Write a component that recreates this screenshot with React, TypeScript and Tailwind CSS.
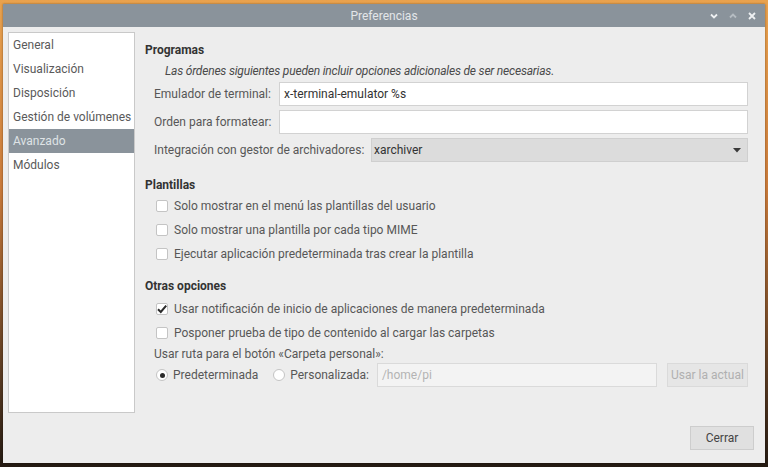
import { useState } from "react";

const sections = [
  "General",
  "Visualización",
  "Disposición",
  "Gestión de volúmenes",
  "Avanzado",
  "Módulos",
];

function CheckBox({ checked, label }: { checked?: boolean; label: string }) {
  return (
    <div className="flex h-[24px] items-center pl-[11px]">
      <div className="relative h-[12px] w-[12px] shrink-0 rounded-[2px] border border-[#c4c4c4] bg-white">
        {checked && (
          <svg viewBox="0 0 12 12" className="absolute left-[-1px] top-[-1px] h-[12px] w-[12px]">
            <path d="M2 6.2 L4.8 9 L10.2 2.6" fill="none" stroke="#2b2b2b" strokeWidth="2" />
          </svg>
        )}
      </div>
      <span className="ml-[6px] whitespace-nowrap">{label}</span>
    </div>
  );
}

function Radio({ checked }: { checked?: boolean }) {
  return (
    <div className="flex h-[12px] w-[12px] shrink-0 items-center justify-center rounded-full border border-[#c4c4c4] bg-white">
      {checked && <div className="h-[5px] w-[5px] rounded-full bg-[#2b2b2b]" />}
    </div>
  );
}

export default function App() {
  const [active, setActive] = useState("Avanzado");

  return (
    <div
      className="h-[467px] w-[768px] overflow-hidden bg-[linear-gradient(180deg,#e9a24e_0%,#c97a3a_40%,#5a3b22_80%,#241a12_100%)] pl-[3px] pt-[4px]"
      style={{ fontFamily: "Roboto, 'Liberation Sans', sans-serif" }}
    >
      <div className="flex h-[459px] w-[762px] flex-col bg-[#ededed] text-[12px] text-[#575757] shadow-[0_0_2px_rgba(0,0,0,0.4)]">
        {/* title bar */}
        <div className="relative flex h-[23px] shrink-0 items-center justify-center bg-[#8a939b]">
          <span className="text-[12px] text-[#e3e6e9]">Preferencias</span>
          <div className="absolute right-[8px] top-0 flex h-[23px] items-center gap-[9px]">
            <svg viewBox="0 0 10 10" className="h-[10px] w-[10px]">
              <path d="M2 3.5 L5 6.5 L8 3.5" fill="none" stroke="#eef0f2" strokeWidth="1.8" />
            </svg>
            <svg viewBox="0 0 10 10" className="h-[10px] w-[10px]">
              <path d="M2 6.5 L5 3.5 L8 6.5" fill="none" stroke="#b5bcc2" strokeWidth="1.8" />
            </svg>
            <svg viewBox="0 0 10 10" className="h-[10px] w-[10px]">
              <path d="M2 2 L8 8 M8 2 L2 8" fill="none" stroke="#eef0f2" strokeWidth="1.8" />
            </svg>
          </div>
        </div>

        {/* body */}
        <div className="flex flex-1 flex-col px-[5px] pt-[5px]">
          <div className="flex">
            <div className="h-[381px] w-[127px] shrink-0 border border-[#c9c9c9] bg-white">
              {sections.map((s) => (
                <div
                  key={s}
                  onClick={() => setActive(s)}
                  className={`flex h-[24px] items-center whitespace-nowrap pl-[4px] ${
                    active === s ? "bg-[#8a939b] text-[#dfe3e6]" : "text-[#5a5a5a]"
                  }`}
                >
                  {s}
                </div>
              ))}
            </div>

            <div className="ml-[10px] mr-[12px] flex min-w-0 flex-1 flex-col">
              <div className="mt-[9px] h-[18px] font-bold leading-[18px] text-[#333333]">Programas</div>
              <div className="mt-[2px] h-[21px] whitespace-nowrap pl-[20px] italic leading-[21px] tracking-[-0.2px] text-[#4a4a4a]">
                Las órdenes siguientes pueden incluir opciones adicionales de ser necesarias.
              </div>
              <div className="flex flex-col gap-[4px] pl-[9px]">
                <div className="flex h-[24px] items-center">
                  <span className="w-[125px] shrink-0 whitespace-nowrap">Emulador de terminal:</span>
                  <div className="flex h-[24px] flex-1 items-center border border-[#d2d2d2] bg-white pl-[4px] text-[#333333]">
                    x-terminal-emulator %s
                  </div>
                </div>
                <div className="flex h-[24px] items-center">
                  <span className="w-[125px] shrink-0 whitespace-nowrap">Orden para formatear:</span>
                  <div className="h-[24px] flex-1 border border-[#d2d2d2] bg-white" />
                </div>
                <div className="flex h-[24px] items-center">
                  <span className="w-[217px] shrink-0 whitespace-nowrap">Integración con gestor de archivadores:</span>
                  <div className="flex h-[24px] flex-1 items-center justify-between border border-[#cfcfcf] bg-[#dcdcdc] pl-[2px] pr-[6px] text-[#333333]">
                    <span>xarchiver</span>
                    <svg viewBox="0 0 8 5" className="h-[5px] w-[8px]">
                      <path d="M0 0 L8 0 L4 4.5 Z" fill="#3a3a3a" />
                    </svg>
                  </div>
                </div>
              </div>

              <div className="mt-[14px] h-[18px] font-bold leading-[18px] text-[#333333]">Plantillas</div>
              <CheckBox label="Solo mostrar en el menú las plantillas del usuario" />
              <CheckBox label="Solo mostrar una plantilla por cada tipo MIME" />
              <CheckBox label="Ejecutar aplicación predeterminada tras crear la plantilla" />

              <div className="mt-[11px] h-[18px] font-bold leading-[18px] text-[#333333]">Otras opciones</div>
              <div className="mt-[2px]">
                <CheckBox checked label="Usar notificación de inicio de aplicaciones de manera predeterminada" />
                <CheckBox label="Posponer prueba de tipo de contenido al cargar las carpetas" />
              </div>
              <div className="h-[18px] whitespace-nowrap pl-[9px] leading-[18px]">Usar ruta para el botón «Carpeta personal»:</div>
              <div className="flex h-[24px] items-center pl-[11px]">
                <Radio checked />
                <span className="ml-[5px] whitespace-nowrap">Predeterminada</span>
                <div className="ml-[15px]">
                  <Radio />
                </div>
                <span className="ml-[5px] whitespace-nowrap">Personalizada:</span>
                <div className="ml-[8px] flex h-[24px] w-[280px] shrink-0 items-center border border-[#dadada] bg-[#f3f3f3] pl-[4px] text-[#b4b4b4]">
                  /home/pi
                </div>
                <div className="ml-[10px] flex h-[24px] flex-1 items-center justify-center whitespace-nowrap border border-[#dadada] bg-[#e6e6e6] text-[#b0b0b0]">
                  Usar la actual
                </div>
              </div>
            </div>
          </div>

          <div className="mt-[13px] flex justify-end pr-[6px]">
            <button className="h-[24px] w-[64px] border border-[#cdcdcd] bg-[#e0e0e0] text-[12px] text-[#444444]">
              Cerrar
            </button>
          </div>
        </div>
      </div>
    </div>
  );
}
